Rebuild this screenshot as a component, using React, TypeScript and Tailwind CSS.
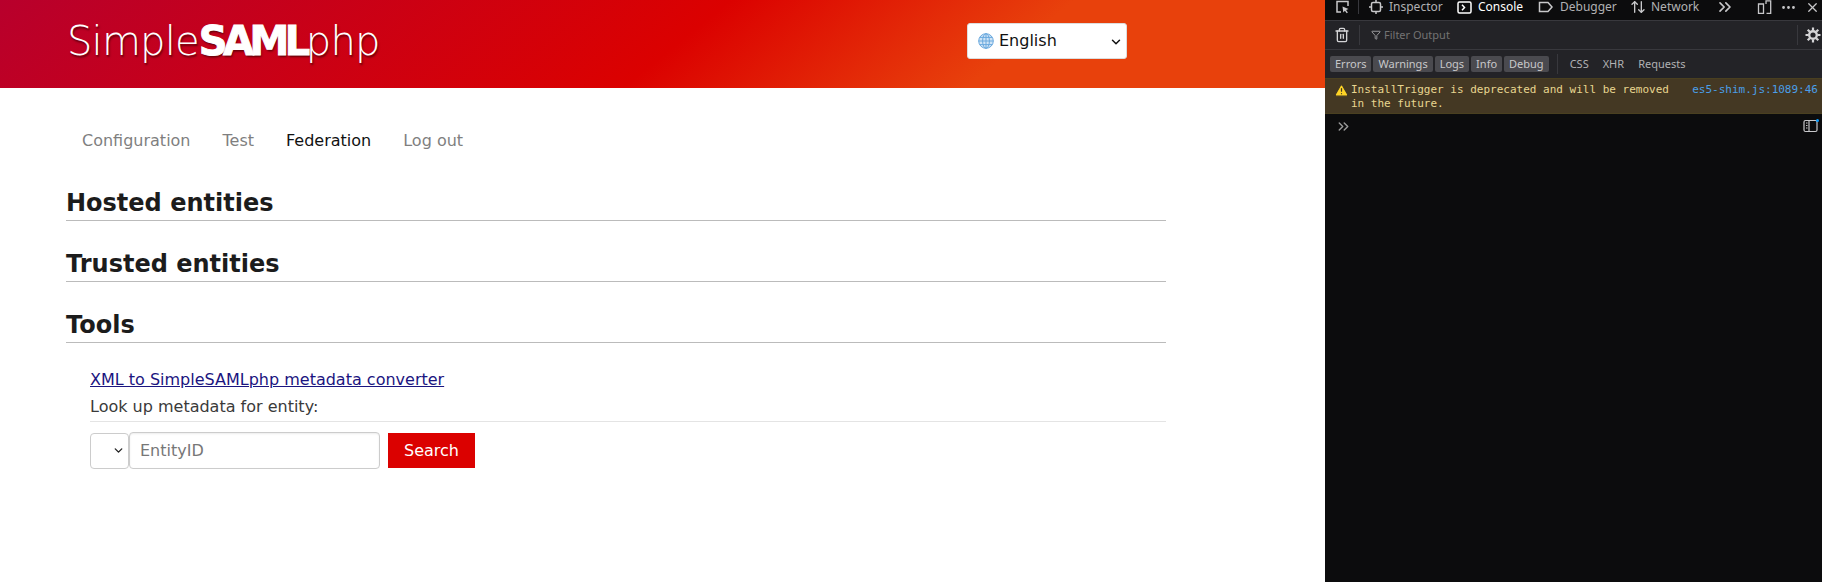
import { ChevronDown, Trash2, Filter, X, MoreHorizontal, ChevronsRight, ArrowUpDown, TriangleAlert } from 'lucide-react';

const navItems = ['Configuration', 'Test', 'Federation', 'Log out'];
const filters = ['Errors', 'Warnings', 'Logs', 'Info', 'Debug'];

function Globe() {
  return (
    <svg width="16" height="16" viewBox="0 0 16 16" fill="none" stroke="#6aa9de" strokeWidth="1">
      <circle cx="8" cy="8" r="7.3" fill="#cfe4f6" />
      <ellipse cx="8" cy="8" rx="3.4" ry="7.3" />
      <path d="M8 .7v14.600M.7 8h14.600M1.800 4.400h12.400M1.800 11.600h12.400" />
    </svg>
  );
}

function Gear() {
  return (
    <svg width="16" height="16" viewBox="0 0 16 16" fill="none" stroke="#d4d4d6">
      <circle cx="8" cy="8" r="3.800" strokeWidth="2.400" />
      <path strokeWidth="2.200" d="M8 .5v3M8 12.500v3M.5 8h3M12.500 8h3M2.700 2.700l2.100 2.100M11.200 11.200l2.100 2.100M2.700 13.300l2.100-2.100M11.200 4.800l2.100-2.100" />
    </svg>
  );
}

function Section({ title }: { title: string }) {
  return (
    <h2 className="h-[61px] border-b border-[#bbb] pt-[29px] text-[24px] leading-[28px] font-bold text-[#1c1c1c]">
      {title}
    </h2>
  );
}

function Page() {
  return (
    <div className="w-[1325px] shrink-0 bg-white font-['DejaVu_Sans',sans-serif]">
      <header className="flex h-[88px] items-center bg-[linear-gradient(141deg,#b8002c_0%,#db0100_51%,#e8410c_75%)] pl-[67px]">
        <div className="w-[900px] pb-[7px] text-[40px] leading-[50px] tracking-[-0.8px] font-extralight text-white [text-shadow:1px_2px_2px_rgba(60,0,0,0.7)]">
          Simple<span className="font-bold tracking-[-4.500px] [-webkit-text-stroke:1px_white]">SAML</span>php
        </div>
        <div className="relative mb-[6px] flex h-[36px] w-[160px] items-center gap-[5px] rounded-[3px] border border-[#ddd] bg-white pl-[10px] text-[16px] text-[#111]">
          <Globe />
          <span>English</span>
          <ChevronDown size={14} strokeWidth={2.500} className="absolute right-[3px] top-[11px]" />
        </div>
      </header>

      <main className="w-[1166px] pl-[66px]">
        <nav className="flex gap-[32px] pt-[43px] pl-[16px] text-[16px] leading-[20px] text-[#7f7f7f]">
          {navItems.map((item) => (
            <span key={item} className={item === 'Federation' ? 'text-[#111]' : ''}>
              {item}
            </span>
          ))}
        </nav>
        <div className="mt-[9px]">
          <Section title="Hosted entities" />
          <Section title="Trusted entities" />
          <Section title="Tools" />
        </div>
        <div className="pl-[24px] pt-[27px] text-[16px] leading-[20px]">
          <a className="block text-[#1b1580] underline">XML to SimpleSAMLphp metadata converter</a>
          <p className="mt-[7px] pb-[4px] border-b border-[#e4e4e4] text-[#3a3a3a]">Look up metadata for entity:</p>
          <div className="flex items-center pt-[10px]">
            <div className="flex h-[36px] w-[39px] items-center justify-end rounded-[4px] border border-[#ccc] bg-white pr-[3px] text-[#222]">
              <ChevronDown size={13} strokeWidth={2.500} />
            </div>
            <input
              placeholder="EntityID"
              className="h-[37px] w-[251px] rounded-[4px] border border-[#ccc] bg-white px-[10px] text-[16px] shadow-[inset_0_1px_2px_rgba(0,0,0,0.08)] outline-none placeholder:text-[#777]"
            />
            <button className="ml-[8px] h-[35px] w-[87px] bg-[#db0100] text-[16px] text-white">Search</button>
          </div>
        </div>
      </main>
    </div>
  );
}

function DevTools() {
  return (
    <div className="flex h-[582px] flex-1 flex-col bg-[#0c0c0d] font-['Noto_Sans',sans-serif] text-[12px] text-[#b1b1b3]">
      <div className="flex h-[21px] items-center border-b border-[#38383d] pb-[6px] pl-[10px] text-[12px] leading-[14px]">
        <svg width="16" height="16" viewBox="0 0 16 16" fill="none" stroke="#c8c8ca" strokeWidth="1.500" className="mr-[7px] shrink-0">
          <path d="M6 13H2V2.500h11V7" />
          <path d="M7.500 7.500l6 2.400-2.400 1 1.800 2.600-1.200.8-1.800-2.500-1.600 1.600z" fill="#c8c8ca" stroke="none" />
        </svg>
        <div className="mr-[10px] h-[14px] w-px shrink-0 bg-[#38383d]" />
        <div className="flex w-[88px] items-center gap-[6px]">
          <svg width="14" height="14" viewBox="0 0 14 14" fill="none" stroke="#c8c8ca" strokeWidth="1.500">
            <rect x="2.500" y="2.500" width="9" height="9" rx="1.500" />
            <path d="M7 0v2.500M7 11.500V14M0 7h2.500M11.500 7H14" />
          </svg>
          <span>Inspector</span>
        </div>
        <div className="flex w-[81px] items-center gap-[6px] text-white">
          <svg width="15" height="13" viewBox="0 0 15 13" fill="none" stroke="#fff" strokeWidth="1.500">
            <rect x="1" y="1" width="13" height="11" rx="1.500" />
            <path d="M5 3.800L7.500 6.500 5 9.200" />
          </svg>
          <span>Console</span>
        </div>
        <div className="flex w-[92px] items-center gap-[6px]">
          <svg width="16" height="12" viewBox="0 0 16 12" fill="none" stroke="#c8c8ca" strokeWidth="1.500">
            <path d="M1.500 1.500h8.500l4 4.500-4 4.500H1.500z" />
          </svg>
          <span>Debugger</span>
        </div>
        <div className="flex w-[85px] items-center gap-[5px]">
          <ArrowUpDown size={16} className="text-[#c8c8ca]" />
          <span>Network</span>
        </div>
        <ChevronsRight size={20} className="shrink-0 text-[#c8c8ca]" />
        <div className="ml-auto flex items-center gap-[8px] pr-[2px] text-[#c8c8ca]">
          <svg width="15" height="15" viewBox="0 0 15 15" fill="none" stroke="#c8c8ca" strokeWidth="1.300">
            <path d="M9 4V.8h4.700v12.600H9.500M6.500 4H1.500v9.400h5z" />
          </svg>
          <MoreHorizontal size={17} />
          <X size={15} />
        </div>
      </div>

      <div className="flex h-[29px] items-center border-b border-[#38383d] bg-[#232327] pl-[9px]">
        <Trash2 size={16} className="mr-[9px] text-[#d4d4d6]" />
        <div className="mr-[11px] h-[20px] w-px bg-[#38383d]" />
        <Filter size={10} className="mr-[3px]" />
        <span className="text-[11px] text-[#737373]">Filter Output</span>
        <div className="ml-auto mr-[7px] h-[20px] w-px bg-[#38383d]" />
        <Gear />
        <div className="w-px" />
      </div>

      <div className="flex h-[28px] items-center gap-[2px] bg-[#232327] pl-[5px] text-[11px]">
        {filters.map((f) => (
          <span key={f} className="rounded-[2px] bg-[#4a4a4f] px-[5px] leading-[16px] text-[#c8c8ca]">
            {f}
          </span>
        ))}
        <div className="mx-[6px] h-[20px] w-px bg-[#38383d]" />
        <span className="ml-[4px] mr-[12px]">CSS</span>
        <span className="mr-[12px]">XHR</span>
        <span>Requests</span>
      </div>

      <div className="flex h-[36px] border-y border-[#4a4020] bg-[#443823] pl-[9px] pr-[4px] pt-[4px] font-['DejaVu_Sans_Mono',monospace] text-[11px] leading-[14px] text-[#e8d690]">
        <TriangleAlert size={15} className="mr-[2px] shrink-0 fill-[#ffd426] text-[#443823]" />
        <span className="w-[330px]">InstallTrigger is deprecated and will be removed in the future.</span>
        <span className="ml-auto text-[#4a9fe8]">es5-shim.js:1089:46</span>
      </div>

      <div className="relative flex h-[25px] items-center pl-[10px] text-[#9a9a9a]">
        <ChevronsRight size={17} />
        <svg width="16" height="14" viewBox="0 0 16 14" fill="none" stroke="#c8c8ca" strokeWidth="1.200" className="absolute right-[3px] top-[5px]">
          <rect x="1" y="1.500" width="13" height="11" rx="1.500" />
          <path d="M6 1.500v11M3 4h1.500M3 6.500h1.500M3 9h1.500" />
          <circle cx="14.500" cy="1.500" r="1.500" fill="#0a9dff" stroke="none" />
        </svg>
      </div>
    </div>
  );
}

export default function App() {
  return (
    <div className="flex h-[582px] w-[1822px] overflow-hidden">
      <Page />
      <DevTools />
    </div>
  );
}
